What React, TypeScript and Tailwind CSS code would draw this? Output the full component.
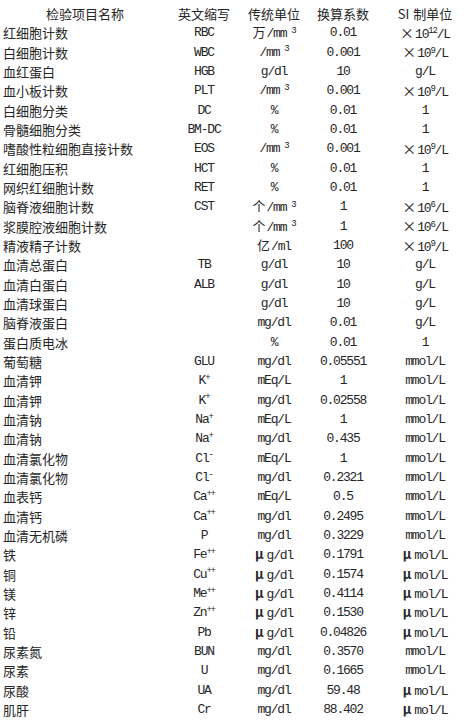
import { ReactNode } from "react";

const cjk = "font-['Noto_Sans_CJK_SC',sans-serif]";
const mono = "font-['Liberation_Mono','Noto_Sans_CJK_SC',monospace] tracking-[-1.2px]";

const Sup = ({ children, gap }: { children: ReactNode; gap?: boolean }) => (
  <sup className={`text-[9px] ${gap ? "ml-[5px]" : ""}`}>{children}</sup>
);

const Mu = () => (
  <span className={`${cjk} mr-[3px] font-bold tracking-normal`}>μ</span>
);

const Han = ({ children }: { children: ReactNode }) => (
  <span className={`${cjk} mr-[1px] tracking-normal`}>{children}</span>
);

const mm3 = (
  <>
    /mm<Sup gap>3</Sup>
  </>
);
const x10 = (p: string) => (
  <>
    <span className={`${cjk} mr-[1px] text-[14px] tracking-normal`}>×</span>10<Sup>{p}</Sup>/L
  </>
);
const ug = (
  <>
    <Mu />
    g/dl
  </>
);
const umol = (
  <>
    <Mu />
    mol/L
  </>
);

type Row = [string, ReactNode, ReactNode, string, ReactNode];

const rows: Row[] = [
  ["红细胞计数", "RBC", <><Han>万</Han>{mm3}</>, "0.01", x10("12")],
  ["白细胞计数", "WBC", mm3, "0.001", x10("9")],
  ["血红蛋白", "HGB", "g/dl", "10", "g/L"],
  ["血小板计数", "PLT", mm3, "0.001", x10("9")],
  ["白细胞分类", "DC", "%", "0.01", "1"],
  ["骨髓细胞分类", "BM-DC", "%", "0.01", "1"],
  ["嗜酸性粒细胞直接计数", "EOS", mm3, "0.001", x10("9")],
  ["红细胞压积", "HCT", "%", "0.01", "1"],
  ["网织红细胞计数", "RET", "%", "0.01", "1"],
  ["脑脊液细胞计数", "CST", <><Han>个</Han>{mm3}</>, "1", x10("6")],
  ["浆膜腔液细胞计数", "", <><Han>个</Han>{mm3}</>, "1", x10("6")],
  ["精液精子计数", "", <><Han>亿</Han>/ml</>, "100", x10("9")],
  ["血清总蛋白", "TB", "g/dl", "10", "g/L"],
  ["血清白蛋白", "ALB", "g/dl", "10", "g/L"],
  ["血清球蛋白", "", "g/dl", "10", "g/L"],
  ["脑脊液蛋白", "", "mg/dl", "0.01", "g/L"],
  ["蛋白质电冰", "", "%", "0.01", "1"],
  ["葡萄糖", "GLU", "mg/dl", "0.05551", "mmol/L"],
  ["血清钾", <>K<Sup>+</Sup></>, "mEq/L", "1", "mmol/L"],
  ["血清钾", <>K<Sup>+</Sup></>, "mg/dl", "0.02558", "mmol/L"],
  ["血清钠", <>Na<Sup>+</Sup></>, "mEq/L", "1", "mmol/L"],
  ["血清钠", <>Na<Sup>+</Sup></>, "mg/dl", "0.435", "mmol/L"],
  ["血清氯化物", <>Cl<Sup>-</Sup></>, "mEq/L", "1", "mmol/L"],
  ["血清氯化物", <>Cl<Sup>-</Sup></>, "mg/dl", "0.2321", "mmol/L"],
  ["血表钙", <>Ca<Sup>++</Sup></>, "mEq/L", "0.5", "mmol/L"],
  ["血清钙", <>Ca<Sup>++</Sup></>, "mg/dl", "0.2495", "mmol/L"],
  ["血清无机磷", "P", "mg/dl", "0.3229", "mmol/L"],
  ["铁", <>Fe<Sup>++</Sup></>, ug, "0.1791", umol],
  ["铜", <>Cu<Sup>++</Sup></>, ug, "0.1574", umol],
  ["镁", <>Me<Sup>++</Sup></>, ug, "0.4114", umol],
  ["锌", <>Zn<Sup>++</Sup></>, ug, "0.1530", umol],
  ["铅", "Pb", ug, "0.04826", umol],
  ["尿素氮", "BUN", "mg/dl", "0.3570", "mmol/L"],
  ["尿素", "U", "mg/dl", "0.1665", "mmol/L"],
  ["尿酸", "UA", "mg/dl", "59.48", umol],
  ["肌肝", "Cr", "mg/dl", "88.402", umol],
];

const grid =
  "grid h-[19.33px] grid-cols-[170px_68px_72px_66px_98px] items-center whitespace-nowrap";

export default function App() {
  return (
    <div className="min-h-[721px] w-[474px] bg-white pt-[4px] text-[13px] leading-none text-[#262626]">
      <div className={`${grid} ${cjk} text-center`}>
        <div>检验项目名称</div>
        <div>英文缩写</div>
        <div>传统单位</div>
        <div>换算系数</div>
        <div>
          <span className="mr-[4px]">SI</span>制单位
        </div>
      </div>
      {rows.map((r, i) => (
        <div key={i} className={grid}>
          <div className={`${cjk} pl-[3px]`}>{r[0]}</div>
          <div className={`${mono} text-center`}>{r[1]}</div>
          <div className={`${mono} text-center`}>{r[2]}</div>
          <div className={`${mono} text-center`}>{r[3]}</div>
          <div className={`${mono} text-center`}>{r[4]}</div>
        </div>
      ))}
    </div>
  );
}
